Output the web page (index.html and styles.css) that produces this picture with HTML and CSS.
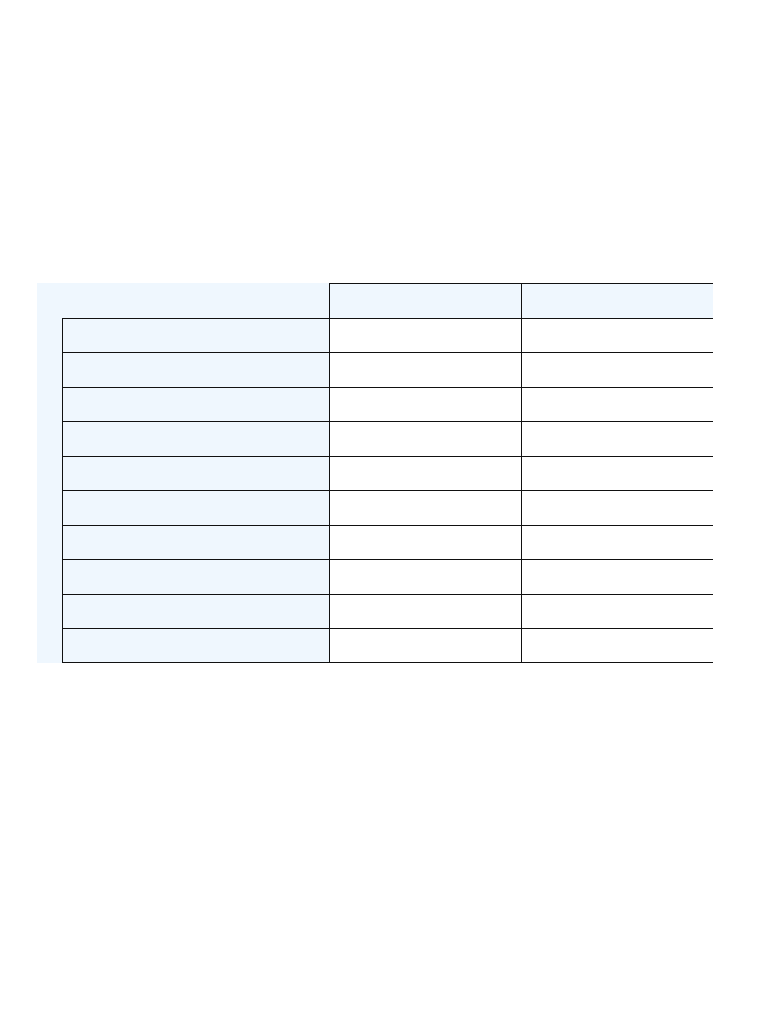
FILE: index.html
```html
<!DOCTYPE html>
<html lang="en">
<head>
<meta charset="utf-8">
<title>Table</title>
<link rel="stylesheet" href="styles.css">
</head>
<body>
<main class="page">
  <div class="sheet">
    <div class="pad"></div><div class="corner"></div><div class="hcell"></div><div class="hcell"></div>
    <div class="pad"></div><div class="label"></div><div class="cell"></div><div class="cell"></div>
    <div class="pad"></div><div class="label"></div><div class="cell"></div><div class="cell"></div>
    <div class="pad"></div><div class="label"></div><div class="cell"></div><div class="cell"></div>
    <div class="pad"></div><div class="label"></div><div class="cell"></div><div class="cell"></div>
    <div class="pad"></div><div class="label"></div><div class="cell"></div><div class="cell"></div>
    <div class="pad"></div><div class="label"></div><div class="cell"></div><div class="cell"></div>
    <div class="pad"></div><div class="label"></div><div class="cell"></div><div class="cell"></div>
    <div class="pad"></div><div class="label"></div><div class="cell"></div><div class="cell"></div>
    <div class="pad"></div><div class="label"></div><div class="cell"></div><div class="cell"></div>
    <div class="pad"></div><div class="label last"></div><div class="cell last"></div><div class="cell last"></div>
  </div>
</main>
</body>
</html>
```

FILE: styles.css
```css
html, body {
  margin: 0;
  padding: 0;
  background: #ffffff;
  font-family: "Liberation Sans", Arial, sans-serif;
}

.page {
  padding: 283px 0 0 37px;
}

.sheet {
  display: grid;
  grid-template-columns: 25px 267px 192px 192px;
  grid-template-rows: 35px repeat(10, 34.46px);
  width: 676px;
  background: #eff7fe;
}

.sheet > div {
  box-sizing: border-box;
}

.hcell {
  border-top: 1px solid #111111;
  border-left: 1px solid #111111;
}

.label {
  border-top: 1px solid #111111;
  border-left: 1px solid #111111;
}

.cell {
  background: #ffffff;
  border-top: 1px solid #111111;
  border-left: 1px solid #111111;
}

.last {
  border-bottom: 1px solid #111111;
}
```
